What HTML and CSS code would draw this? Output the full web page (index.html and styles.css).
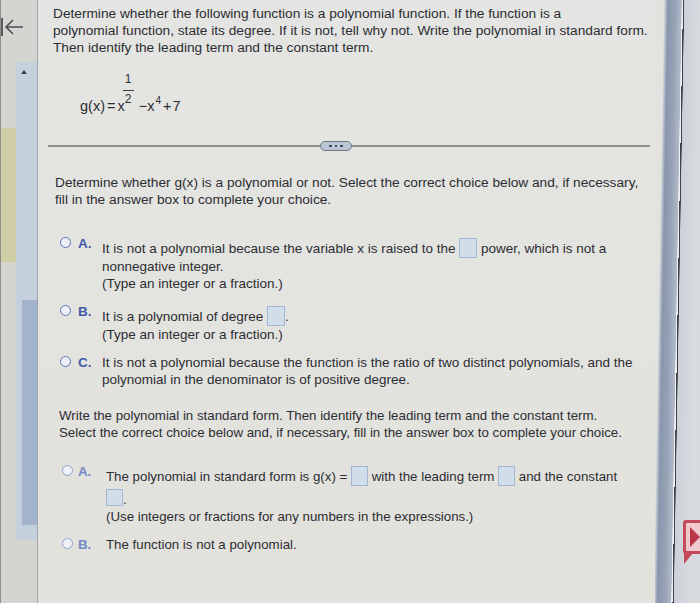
FILE: index.html
```html
<!DOCTYPE html>
<html lang="en">
<head>
<meta charset="utf-8">
<title>Polynomial question</title>
<link rel="stylesheet" href="styles.css">
</head>
<body>
<div class="screen">
  <aside class="side">
    <div class="side-top">
      <svg class="back" width="24" height="20" viewBox="0 0 24 20" aria-label="Back">
        <line x1="1" y1="1" x2="1" y2="19" stroke="#5a5c60" stroke-width="2"/>
        <path d="M22 10H5M12 3L5 10L12 17" fill="none" stroke="#4a4c52" stroke-width="1.5"/>
      </svg>
    </div>
    <div class="side-body">
      <div class="side-col"><div class="tint"></div></div>
      <div class="track">
        <span class="track-up"></span>
        <div class="thumb"></div>
      </div>
    </div>
  </aside>

  <main class="content">
    <p class="intro">Determine whether the following function is a polynomial function. If the function is a<br>polynomial function, state its degree. If it is not, tell why not. Write the polynomial in standard form.<br>Then identify the leading term and the constant term.</p>

    <div class="formula">
      <span class="ft">g(x)</span><span class="ft op">=</span><span class="ft">x</span><span class="frac"><span class="num">1</span><span class="den">2</span></span><span class="ft op minus">−</span><span class="ft">x</span><span class="pow">4</span><span class="ft op plus">+</span><span class="ft seven">7</span>
    </div>

    <div class="divider">
      <span class="rule first"></span>
      <span class="pill"><i></i><i></i><i></i></span>
      <span class="rule"></span>
    </div>

    <section class="part part-one">
      <p class="prompt">Determine whether g(x) is a polynomial or not. Select the correct choice below and, if necessary,<br>fill in the answer box to complete your choice.</p>
      <div class="choices">
        <div class="choice">
          <span class="radio"></span><span class="letter">A.</span>
          <div class="body">It is not a polynomial because the variable x is raised to the <span class="box"></span> power, which is not a<br>nonnegative integer.<br>(Type an integer or a fraction.)</div>
        </div>
        <div class="choice">
          <span class="radio"></span><span class="letter">B.</span>
          <div class="body">It is a polynomial of degree <span class="box"></span>.<br>(Type an integer or a fraction.)</div>
        </div>
        <div class="choice">
          <span class="radio"></span><span class="letter">C.</span>
          <div class="body">It is not a polynomial because the function is the ratio of two distinct polynomials, and the<br>polynomial in the denominator is of positive degree.</div>
        </div>
      </div>
    </section>

    <section class="part part-two">
      <p class="prompt">Write the polynomial in standard form. Then identify the leading term and the constant term.<br>Select the correct choice below and, if necessary, fill in the answer box to complete your choice.</p>
      <div class="choices">
        <div class="choice">
          <span class="radio"></span><span class="letter">A.</span>
          <div class="body">The polynomial in standard form is g(x) = <span class="box"></span> with the leading term <span class="box"></span> and the constant<br><span class="box short"></span>.<br>(Use integers or fractions for any numbers in the expressions.)</div>
        </div>
        <div class="choice">
          <span class="radio"></span><span class="letter">B.</span>
          <div class="body">The function is not a polynomial.</div>
        </div>
      </div>
    </section>
  </main>

  <aside class="rail">
    <svg class="help" width="18" height="46" viewBox="0 0 18 46" aria-label="Help">
      <rect x="1" y="1" width="26" height="34" rx="3" fill="#c44a5a"/>
      <polygon points="2,32 2,45 11,34" fill="#c44a5a"/>
      <rect x="4" y="4" width="22" height="28" rx="1" fill="#f1c9ce"/>
      <polygon points="8,8 18,18 8,28" fill="#b8384a"/>
    </svg>
  </aside>
</div>
</body>
</html>
```

FILE: styles.css
```css
html, body {
  margin: 0;
  padding: 0;
}

body {
  background: #e2e2de;
  font-family: "Liberation Sans", Arial, sans-serif;
  font-size: 13.7px;
  color: #2c2d33;
}

.screen {
  display: flex;
  width: 700px;
  height: 603px;
  overflow: hidden;
}

/* ---------- left strip ---------- */
.side {
  flex: none;
  width: 36px;
  border-left: 1px solid #8e8f8c;
  border-right: 1px solid #a2a5aa;
  background: #d4d5d1;
  display: flex;
  flex-direction: column;
}

.side-top {
  height: 62px;
  flex: none;
}

.back {
  display: block;
  margin-top: 17px;
}

.side-body {
  display: flex;
  flex: 1;
}

.side-col {
  width: 15px;
  flex: none;
}

.tint {
  margin-top: 66px;
  height: 134px;
  background: #cfcda4;
}

.track {
  width: 21px;
  height: 478px;
  background: #c4d1dc;
  display: flex;
  flex-direction: column;
}

.track-up {
  width: 0;
  height: 0;
  border-left: 3.5px solid transparent;
  border-right: 3.5px solid transparent;
  border-bottom: 4px solid #3e4350;
  margin: 8px 0 0 5px;
}

.thumb {
  margin: auto 0 15px 6px;
  width: 15px;
  height: 225px;
  background: #a3b3cb;
}

/* ---------- main content ---------- */
.content {
  flex: 1;
  min-width: 0;
  padding-top: 5px;
  background: linear-gradient(#e4e5e2, #e2e1dc);
}

.intro,
.prompt {
  margin: 0;
  line-height: 17px;
  white-space: nowrap;
}

.intro {
  margin-left: 15px;
}

.formula {
  display: flex;
  align-items: flex-end;
  height: 43px;
  margin: 16px 0 0 42px;
  font-size: 14.5px;
}

.ft {
  line-height: 17px;
}

.op {
  margin: 0 2px;
}

.minus {
  margin-left: 5px;
  margin-right: 0;
}

.plus {
  margin-left: 2px;
  margin-right: 1px;
}

.frac {
  display: flex;
  flex-direction: column;
  align-items: stretch;
  width: 11px;
  margin: 0 0 10px -2px;
  font-size: 12px;
  line-height: 12px;
  text-align: center;
}

.num {
  padding-bottom: 5px;
  border-bottom: 1px solid #3a3b40;
}

.den {
  padding-top: 2px;
}

.pow {
  font-size: 10px;
  line-height: 10px;
  margin: 0 0 9px 1px;
}

.divider {
  display: flex;
  align-items: center;
  height: 10px;
  margin: 26px 5px 0 10px;
}

.rule {
  flex: 1;
  height: 1.5px;
  background: #8e8e8c;
}

.rule.first {
  flex: 0 0 272px;
}

.pill {
  flex: none;
  box-sizing: border-box;
  width: 32px;
  height: 10px;
  border: 1.5px solid #6f7787;
  border-radius: 5px;
  background: #bcc6d4;
  display: flex;
  align-items: center;
  justify-content: center;
  gap: 3px;
}

.pill i {
  width: 2.5px;
  height: 2.5px;
  border-radius: 50%;
  background: #2c3650;
}

/* ---------- questions ---------- */
.part-one .prompt {
  margin: 23px 0 0 17px;
}

.part-one .choices {
  margin-top: 27px;
  padding-left: 22px;
  font-size: 13.5px;
}

.part-two {
  font-size: 13.3px;
}

.part-two .prompt {
  margin: 19px 0 0 21px;
}

.part-two .choices {
  margin-top: 22px;
  padding-left: 24px;
}

.choices {
  display: flex;
  flex-direction: column;
  gap: 11px;
}

.choice {
  display: grid;
  grid-template-columns: 18px 24px 1fr;
  align-items: start;
}

.part-two .choice {
  grid-template-columns: 16px 28px 1fr;
}

.radio {
  box-sizing: border-box;
  width: 11px;
  height: 11px;
  margin-top: 2px;
  border: 1.5px solid #5b71b9;
  border-radius: 50%;
  background: #eef0f5;
}

.part-two .radio {
  border-color: #8ea3cf;
}

.letter {
  line-height: 17px;
  font-weight: bold;
  color: #4358a8;
}

.part-two .letter {
  color: #7288c2;
}

.body {
  line-height: 17px;
  white-space: nowrap;
}

.box {
  display: inline-block;
  box-sizing: border-box;
  width: 18px;
  height: 20px;
  margin-top: 3px;
  vertical-align: -5px;
  border: 1px solid #a3b8d2;
  background: #d1dde9;
}

.part-two .box {
  width: 17px;
}

.box.short {
  height: 17px;
  vertical-align: -2px;
}

/* ---------- right rail ---------- */
.rail {
  flex: none;
  width: 45px;
  display: flex;
  flex-direction: column;
  background: linear-gradient(91deg,
    #e2e2de 0px, #e2e2de 9px,
    #b0b9c8 11px, #8896ac 13px,
    #97a2b6 20px, #b1bac9 26.5px,
    #eef0f2 27px, #eef0f2 28px,
    #3e4149 28px, #3e4149 29px,
    #cbd0d8 29.5px, #d8dbdf 45px);
}

.help {
  display: block;
  margin: auto 0 38px 27px;
}
```
